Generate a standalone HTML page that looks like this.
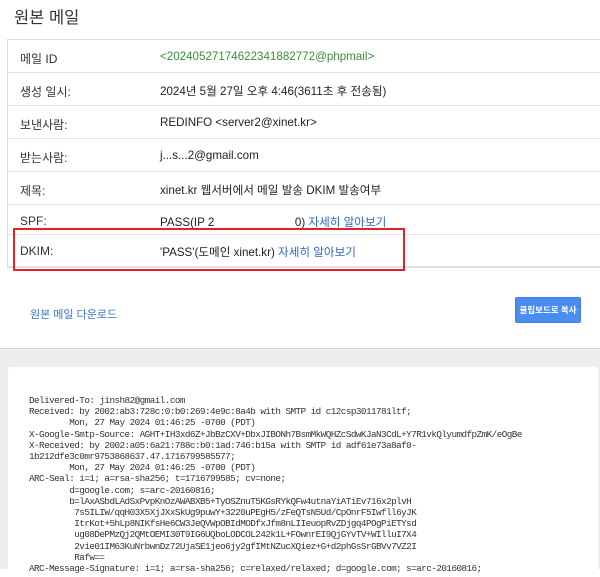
<!DOCTYPE html>
<html><head><meta charset="utf-8"><style>
*{margin:0;padding:0;box-sizing:border-box}
body{width:600px;height:569px;overflow:hidden;background:#fff;font-family:"Liberation Sans","Noto Sans CJK KR",sans-serif;color:#222;position:relative}
.title{position:absolute;left:14px;top:4px;font-size:16.5px;color:#333}
.tbl{position:absolute;left:7px;top:39px;width:593px;border:1px solid #ddd;border-right:none}
.row{height:33px;border-bottom:1px solid #e4e4e4;position:relative;font-size:12px}
.row .l{position:absolute;left:12px;top:10px;color:#333}
.row .v{position:absolute;left:152px;top:10px;color:#222;font-size:11.6px}
.row .v.g{color:#3c8c3c}.b{color:#2c66c6}
.red{position:absolute;left:13px;top:228px;width:392px;height:43px;border:2.5px solid #e52028}
.dl{position:absolute;left:30px;top:306px;font-size:11px;color:#3b73c9}
.btn{position:absolute;left:515px;top:297px;width:66px;height:26px;background:#4a8df0;border:1px solid #3f7fe0;border-radius:2px;color:#fff;font-size:8.5px;font-weight:bold;text-align:center;line-height:24px}
.gray{position:absolute;left:0;top:348px;width:600px;height:221px;background:#eeeeee;border-top:1px solid #d4d4d4}
.card{position:absolute;left:8px;top:367px;width:590px;height:210px;background:#fff;border-radius:3px}
pre{position:absolute;left:29px;top:395px;font-family:"Liberation Mono",monospace;font-size:9.3px;line-height:11.2px;color:#333;letter-spacing:-0.55px;white-space:pre}
</style></head><body>
<div class="title">원본 메일</div>
<div class="tbl">
<div class="row"><span class="l">메일 ID</span><span class="v g">&lt;20240527174622341882772@phpmail&gt;</span></div>
<div class="row"><span class="l">생성 일시:</span><span class="v">2024년 5월 27일 오후 4:46(3611초 후 전송됨)</span></div>
<div class="row"><span class="l">보낸사람:</span><span class="v">REDINFO &lt;server2@xinet.kr&gt;</span></div>
<div class="row"><span class="l">받는사람:</span><span class="v">j...s...2@gmail.com</span></div>
<div class="row"><span class="l">제목:</span><span class="v">xinet.kr 웹서버에서 메일 발송 DKIM 발송여부</span></div>
<div class="row" style="height:30px"><span class="l" style="top:9px">SPF:</span><span class="v" style="top:9px">PASS(IP 2&nbsp;&nbsp;&nbsp;&nbsp;&nbsp;&nbsp;&nbsp;&nbsp;&nbsp;&nbsp;&nbsp;&nbsp;&nbsp;&nbsp;&nbsp;&nbsp;&nbsp;&nbsp;&nbsp;&nbsp;&nbsp;&nbsp;&nbsp;&nbsp;&nbsp;0) <span class="b">자세히 알아보기</span></span></div>
<div class="row" style="height:32px"><span class="l" style="top:9px">DKIM:</span><span class="v" style="top:9px">'PASS'(도메인 xinet.kr) <span class="b">자세히 알아보기</span></span></div>
</div>
<div class="red"></div>
<div class="dl">원본 메일 다운로드</div>
<div class="btn">클립보드로 복사</div>
<div class="gray"></div>
<div class="card"></div>
<pre>Delivered-To: jinsh82@gmail.com
Received: by 2002:ab3:728c:0:b0:269:4e9c:8a4b with SMTP id c12csp3011781ltf;
        Mon, 27 May 2024 01:46:25 -0700 (PDT)
X-Google-Smtp-Source: AGHT+IH3xd6Z+JbBzCXV+DbxJIBONh7BsmMkWQHZcSdwKJaN3CdL+Y7R1vkQlyumdfpZmK/eOgBe
X-Received: by 2002:a05:6a21:788c:b0:1ad:746:b15a with SMTP id adf61e73a8af0-
1b212dfe3c0mr9753868637.47.1716799585577;
        Mon, 27 May 2024 01:46:25 -0700 (PDT)
ARC-Seal: i=1; a=rsa-sha256; t=1716799585; cv=none;
        d=google.com; s=arc-20160816;
        b=lAxASbdLAdSxPvpKnOzAWABXB5+TyOSZnuT5KGsRYkQFw4utnaYiATiEv716x2plvH
         7s5ILIW/qqH03X5XjJXxSkUg9puwY+3220uPEgH5/zFeQTsN5Ud/CpOnrF5Iwfll6yJK
         ItrKot+5hLp8NIKfsHe6CW3JeQVWpOBIdMODfxJfm8nLIIeuopRvZDjgq4POgPiETYsd
         ug08DePMzQj2QMtOEMI30T9IG6UQboLODCOL242k1L+FOwnrEI9QjGYvTV+WIlluI7X4
         2vie01IM63KuNrbwnDz72UjaSE1jeo6jy2gfIMtNZucXQiez+G+d2phGsSrGBVv7VZ2I
         Rafw==
ARC-Message-Signature: i=1; a=rsa-sha256; c=relaxed/relaxed; d=google.com; s=arc-20160816;</pre>
</body></html>
